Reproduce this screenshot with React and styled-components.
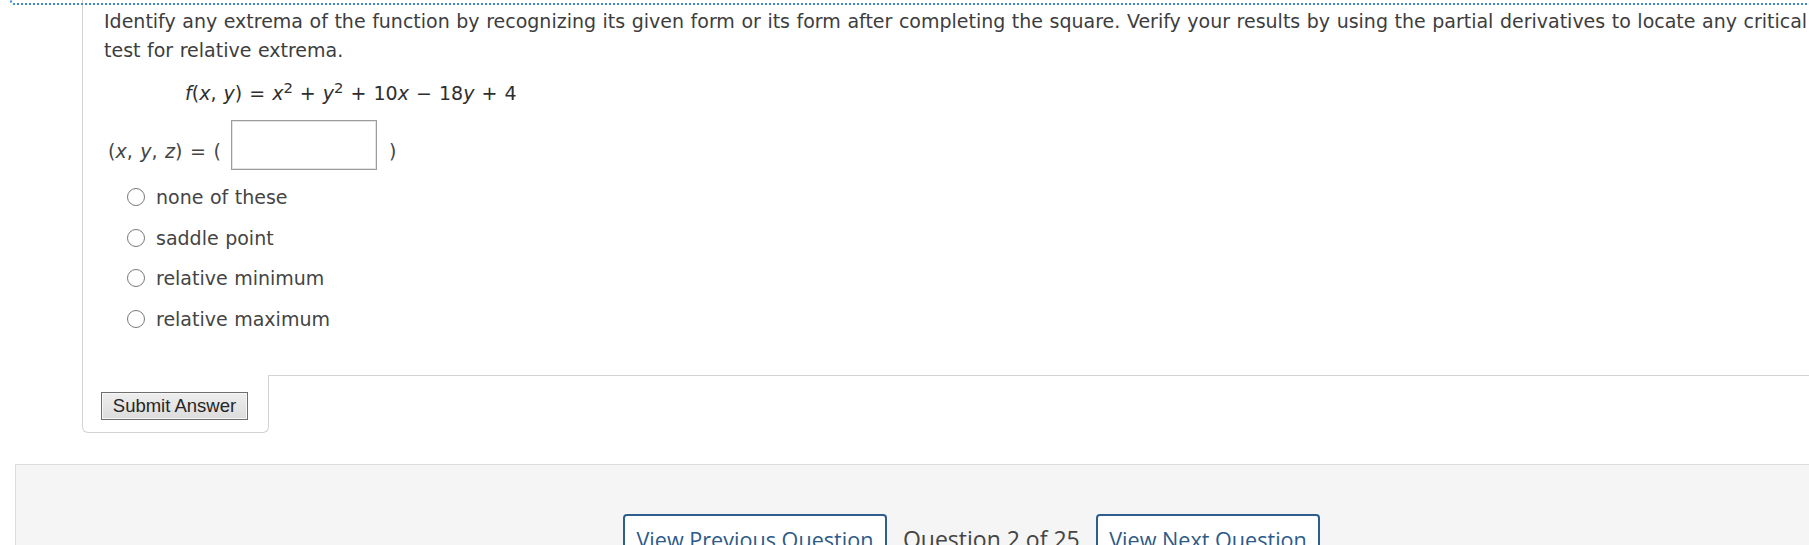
import React from "react";
import styled, { createGlobalStyle } from "styled-components";

const GlobalStyle = createGlobalStyle`
  html, body {
    margin: 0;
    padding: 0;
    overflow: hidden;
    background: #ffffff;
  }
  body {
    font-family: "DejaVu Sans", Verdana, sans-serif;
  }
`;

const Page = styled.div`
  position: relative;
  width: 1809px;
  height: 545px;
  overflow: hidden;
`;

// dotted focus ring of the element above, only its bottom edge shows
const FocusRing = styled.div`
  position: absolute;
  left: 10px;
  right: -10px;
  top: -20px;
  height: 23px;
  border-left: 2px dotted #3f8bd9;
  border-bottom: 2px dotted #3f8bd9;
  border-bottom-left-radius: 4px;
  pointer-events: none;
`;

const QuestionCard = styled.div`
  margin-left: 82px;
  width: 1800px;
`;

const QuestionBody = styled.div`
  height: 375px;
  box-sizing: border-box;
  border-left: 1px solid #d2d2d2;
  padding: 7px 0 0 21px;
`;

const Prompt = styled.div`
  font-size: 19px;
  line-height: 29px;
  word-spacing: 0.5px;
  color: #3d3d3d;
  white-space: nowrap;
`;

const Formula = styled.div`
  margin: 14px 0 0 81px;
  font-size: 19px;
  line-height: 29px;
  word-spacing: 1px;
  color: #2e2e2e;

  sup {
    font-size: 0.78em;
    line-height: 0;
    vertical-align: 0.5em;
  }
`;

const Var = styled.i`
  font-style: italic;
`;

const AnswerRow = styled.div`
  display: flex;
  align-items: center;
  margin: 12px 0 0 4px;
`;

const AnswerLabel = styled.span`
  padding-top: 12px;
  font-size: 19px;
  line-height: 29px;
  word-spacing: 1.5px;
  color: #444444;
`;

const AnswerBox = styled.div`
  width: 146px;
  height: 50px;
  box-sizing: border-box;
  margin: 0 12px 0 ${(p) => p.gap}px;
  border: 1px solid #9c9c9c;
  box-shadow: inset 0 0 0 1px #e4e4e4;
  background: #ffffff;
`;

const Options = styled.div`
  margin-top: 7px;
  padding-left: 23px;
`;

const Option = styled.label`
  display: flex;
  align-items: center;
  height: 40.5px;
  font-size: 19px;
  word-spacing: 0.5px;
  color: #444444;
`;

const Radio = styled.span`
  width: 18px;
  height: 18px;
  box-sizing: border-box;
  margin-right: 11px;
  border: 1.5px solid #7a7a7a;
  border-radius: 50%;
  background: #ffffff;
`;

const ActionRow = styled.div`
  display: flex;
`;

const SubmitTab = styled.div`
  width: 187px;
  height: 58px;
  box-sizing: border-box;
  border: 1px solid #d2d2d2;
  border-top: none;
  border-radius: 0 0 6px 6px;
  padding: 17px 0 0 18px;
`;

const TabRest = styled.div`
  flex: 1;
  border-top: 1px solid #d2d2d2;
`;

const SubmitButton = styled.button`
  width: 147px;
  height: 28px;
  box-sizing: border-box;
  padding: 0;
  border: 1px solid #6f6f6f;
  background: linear-gradient(#eeeeee, #dcdcdc);
  box-shadow: inset 0 0 0 1px #f7f7f7;
  font-family: "Liberation Sans", Arial, sans-serif;
  font-size: 18.5px;
  line-height: 26px;
  color: #262626;
`;

const NavPanel = styled.div`
  margin: 31px 0 0 15px;
  width: 1900px;
  height: 200px;
  border: 1px solid #dcdcdc;
  background: #f5f5f5;
  padding: 49px 0 0 607px;
  font-family: "Open Sans", "Segoe UI", sans-serif;
`;

const Nav = styled.div`
  display: flex;
  align-items: flex-start;
  gap: 16px;
`;

const NavButton = styled.button`
  padding: 9px 11.5px 14px;
  border: 2px solid #2d5f8e;
  border-radius: 4px;
  background: #ffffff;
  font-family: inherit;
  font-size: 21.6px;
  line-height: 29px;
  color: #2d5a88;
`;

const NavCount = styled.span`
  padding: 10px 0 0 0;
  font-size: 23px;
  line-height: 31px;
  color: #444444;
`;

const choices = ["none of these", "saddle point", "relative minimum", "relative maximum"];

function App() {
  return (
    <Page>
      <GlobalStyle />
      <QuestionCard>
        <QuestionBody>
          <Prompt>
            Identify any extrema of the function by recognizing its given form or its form after
            completing the square. Verify your results by using the partial derivatives to locate
            any critical points and
            <br />
            test for relative extrema.
          </Prompt>
          <Formula>
            <Var>f</Var>(<Var>x</Var>, <Var>y</Var>) = <Var>x</Var>
            <sup>2</sup> + <Var>y</Var>
            <sup>2</sup> + 10<Var>x</Var> &minus; 18<Var>y</Var> + 4
          </Formula>
          <AnswerRow>
            <AnswerLabel>
              (<Var>x</Var>, <Var>y</Var>, <Var>z</Var>) = (
            </AnswerLabel>
            <AnswerBox gap={10} />
            <AnswerLabel>)</AnswerLabel>
          </AnswerRow>
          <Options>
            {choices.map((c) => (
              <Option key={c}>
                <Radio />
                {c}
              </Option>
            ))}
          </Options>
        </QuestionBody>
        <ActionRow>
          <SubmitTab>
            <SubmitButton>Submit Answer</SubmitButton>
          </SubmitTab>
          <TabRest />
        </ActionRow>
      </QuestionCard>
      <NavPanel>
        <Nav>
          <NavButton>View Previous Question</NavButton>
          <NavCount>Question 2 of 25</NavCount>
          <NavButton>View Next Question</NavButton>
        </Nav>
      </NavPanel>
      <FocusRing />
    </Page>
  );
}

export default App;
